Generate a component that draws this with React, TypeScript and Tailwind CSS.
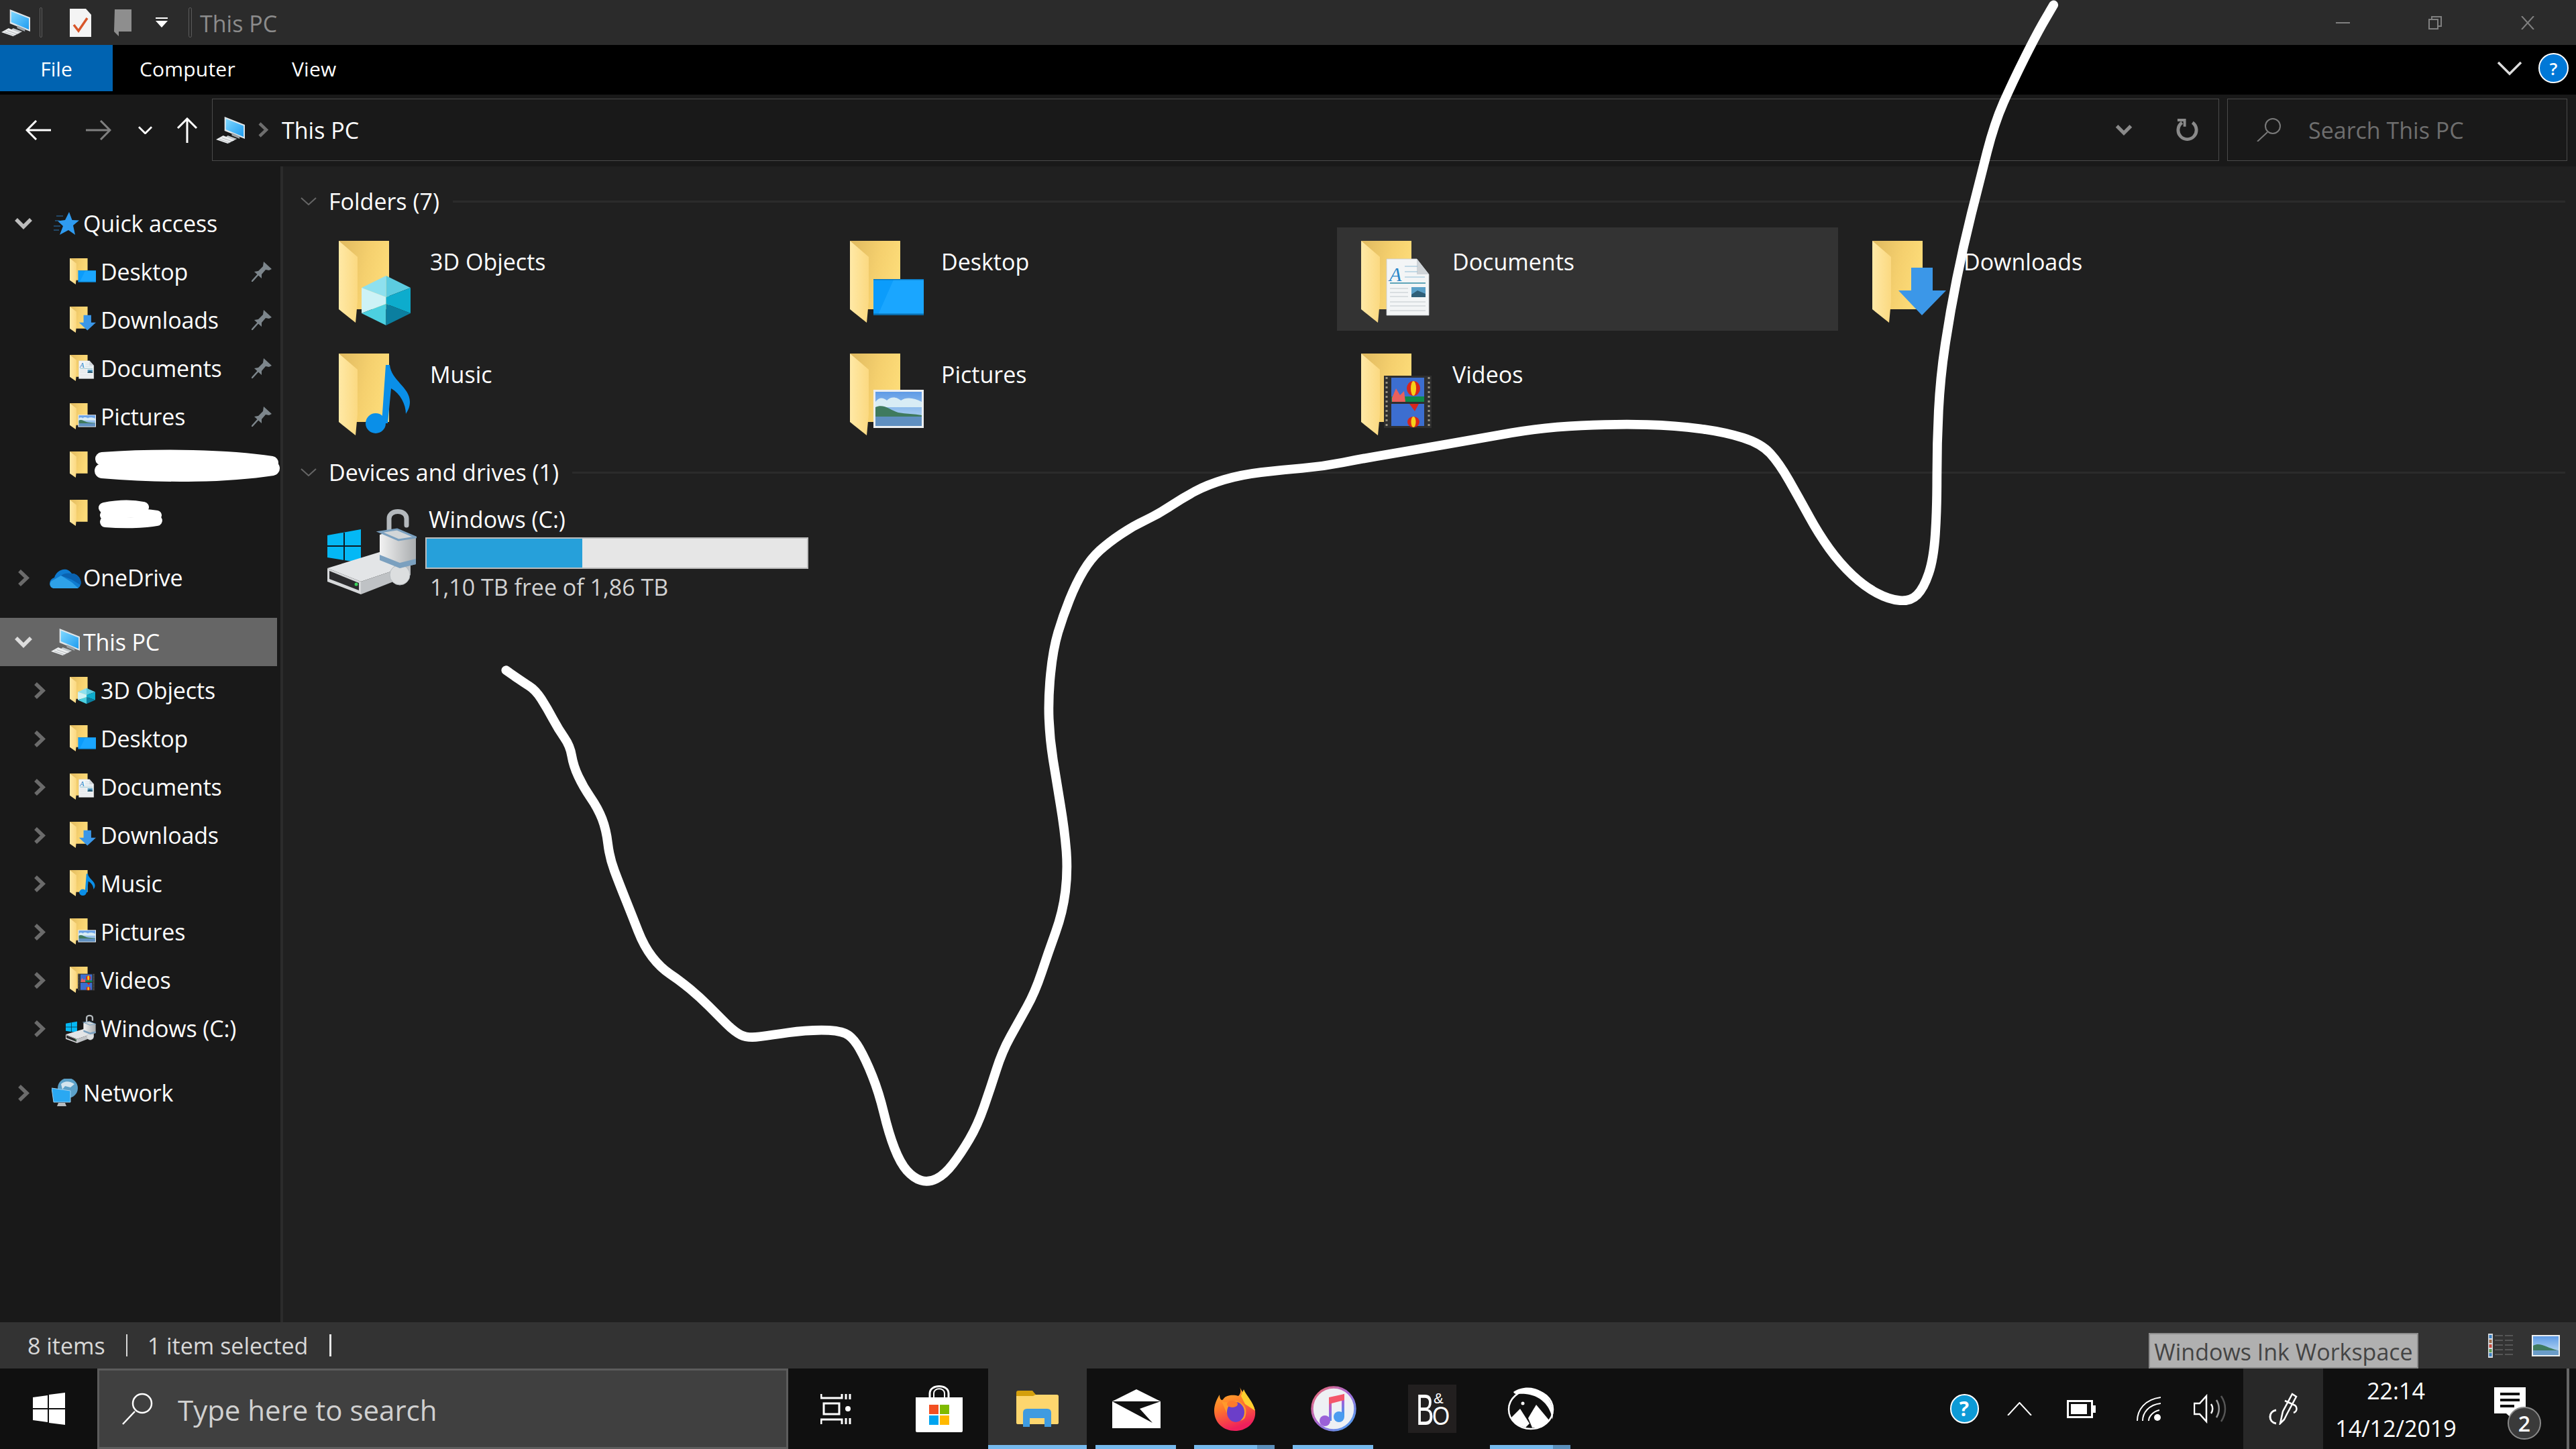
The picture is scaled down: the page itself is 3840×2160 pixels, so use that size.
import React from "react";

const FONT = '"Open Sans", "Noto Sans", sans-serif';

// ink strokes traced on the 1568 wide preview, scaled up in the svg
const INK: [number, number][] = [
  [308, 408], [318, 415], [326, 420], [333, 431], [340, 444], [347, 454], [349, 466], [355, 479], [364, 492], [369, 505],
  [371, 522], [377, 538], [385, 558], [392, 576], [402, 589], [414, 597], [426, 607], [437, 618], [447, 628], [455, 632],
  [470, 630], [490, 627], [510, 627], [519, 631], [527, 645], [535, 665], [541, 690], [548, 708], [556, 717], [565, 720],
  [575, 715], [585, 702], [595, 685], [603, 662], [610, 640], [620, 622], [630, 604], [638, 580], [647, 555], [650, 530],
  [648, 505], [643, 475], [639, 450], [638, 425], [641, 395], [647, 375], [655, 355], [664, 340], [675, 330], [690, 320],
  [705, 313], [720, 303], [735, 295], [755, 289], [780, 286], [805, 284], [830, 279], [860, 274], [900, 267], [940, 260],
  [985, 258], [1020, 259], [1050, 263], [1072, 270], [1083, 282], [1095, 303], [1107, 325], [1120, 343], [1135, 357], [1150, 365],
  [1163, 366], [1171, 358], [1177, 340], [1179, 310], [1179, 270], [1181, 230], [1187, 190], [1195, 150], [1205, 110], [1214, 75],
  [1225, 50], [1240, 20], [1250, 3],
];

function smooth(pts: [number, number][]) {
  let d = `M${pts[0][0]} ${pts[0][1]}`;
  for (let i = 1; i < pts.length - 1; i++) {
    const mx = (pts[i][0] + pts[i + 1][0]) / 2;
    const my = (pts[i][1] + pts[i + 1][1]) / 2;
    d += ` Q${pts[i][0]} ${pts[i][1]} ${mx} ${my}`;
  }
  const last = pts[pts.length - 1];
  return d + ` L${last[0]} ${last[1]}`;
}

function Defs() {
  return (
    <svg className="absolute h-0 w-0">
      <defs>
        <linearGradient id="fBack" x1="0" y1="0" x2="1" y2="0.3">
          <stop offset="0" stopColor="#dfb95f" />
          <stop offset="0.6" stopColor="#f5d06e" />
          <stop offset="1" stopColor="#fcdb78" />
        </linearGradient>
        <linearGradient id="fFlap" x1="0" y1="0" x2="1" y2="0">
          <stop offset="0" stopColor="#ffe9a6" />
          <stop offset="1" stopColor="#fbd981" />
        </linearGradient>
        <linearGradient id="screen" x1="0" y1="0" x2="1" y2="1">
          <stop offset="0" stopColor="#7fd8ff" />
          <stop offset="1" stopColor="#1f9cf0" />
        </linearGradient>
        <linearGradient id="sky" x1="0" y1="0" x2="0" y2="1">
          <stop offset="0" stopColor="#5f9be6" />
          <stop offset="1" stopColor="#c4e0f2" />
        </linearGradient>
        <linearGradient id="ff" x1="0" y1="0" x2="0.3" y2="1">
          <stop offset="0" stopColor="#ffc02f" />
          <stop offset="0.5" stopColor="#ff7a2a" />
          <stop offset="1" stopColor="#ef1f5c" />
        </linearGradient>
        <linearGradient id="itRing" x1="0" y1="0" x2="1" y2="1">
          <stop offset="0" stopColor="#f06a6a" />
          <stop offset="0.5" stopColor="#a66ad8" />
          <stop offset="1" stopColor="#3fa8f0" />
        </linearGradient>
        <linearGradient id="itNote" x1="0" y1="0" x2="0.4" y2="1">
          <stop offset="0" stopColor="#f4566a" />
          <stop offset="0.55" stopColor="#a45fd8" />
          <stop offset="1" stopColor="#3a9bf0" />
        </linearGradient>
        <linearGradient id="lock" x1="0" y1="0" x2="1" y2="0">
          <stop offset="0" stopColor="#f2f2f2" />
          <stop offset="1" stopColor="#a9acae" />
        </linearGradient>
      </defs>
    </svg>
  );
}

type Overlay = "cube" | "desktop" | "doc" | "down" | "music" | "pic" | "video" | "none";

function FolderIcon({ kind, className }: { kind: Overlay; className: string }) {
  return (
    <svg viewBox="0 0 110 128" preserveAspectRatio="none" className={className}>
      <path d="M0 0H75V102H26Z" fill="url(#fBack)" />
      <path d="M0 0L28 24V90L25 122L0 102Z" fill="url(#fFlap)" />
      {kind === "cube" && (
        <g>
          <polygon points="70.5,52 107,70 70.5,84" fill="#5ccbe0" />
          <polygon points="70.5,52 34,70 70.5,84" fill="#8ee0ee" />
          <polygon points="34,70 70.5,84 70.5,94 34,108" fill="#cdf2f6" />
          <polygon points="107,70 70.5,84 70.5,94 107,108" fill="#0daccd" />
          <polygon points="34,108 70.5,94 70.5,126" fill="#4cd0e0" />
          <polygon points="107,108 70.5,94 70.5,126" fill="#0b7fa0" />
        </g>
      )}
      {kind === "desktop" && (
        <g>
          <rect x="35" y="57" width="75" height="54" fill="#0b9cfb" />
          <polygon points="65,58 110,58 110,110 42,110" fill="#1aa6ff" />
          <rect x="35" y="57" width="75" height="1.5" fill="#0a78c0" />
          <rect x="35" y="108.5" width="75" height="2.5" fill="#0a6aa8" />
        </g>
      )}
      {kind === "doc" && (
        <g>
          <polygon points="38,27 83,27 101,50 101,111 38,111" fill="#f3f5f6" stroke="#c8ccd0" strokeWidth="0.8" />
          <polygon points="83,27 101,50 83,50" fill="#cfd4d8" />
          <text x="42" y="60" fontFamily="'Liberation Serif', serif" fontStyle="italic" fontSize="30" fill="#2a86c9">A</text>
          <path d="M65 38H84M65 46H84M65 54H95" stroke="#8fbcd6" strokeWidth="1" />
          <rect x="43" y="62" width="53" height="2" fill="#5fa5b8" />
          <rect x="75" y="69" width="21" height="15" fill="#5aa0c8" />
          <path d="M75 80L84 74L96 79V84H75Z" fill="#2f5f78" />
          <path d="M43 71H70M43 77H70M43 83H70M43 91H96M43 97H96M43 104H96" stroke="#c0c7cc" strokeWidth="1" />
        </g>
      )}
      {kind === "down" && <path d="M58 40H90V74H110L74 111L39 74H58Z" fill="#3b97e8" />}
      {kind === "music" && (
        <g fill="#0a8fe8">
          <ellipse cx="55" cy="104" rx="15" ry="15" />
          <path d="M64 104L70 17H76C78 40 106 50 106 72C106 80 103 85 100 90C100 76 92 60 78 52L73 104Z" />
        </g>
      )}
      {kind === "pic" && (
        <g>
          <rect x="35" y="54" width="75" height="57" fill="#eceff1" />
          <rect x="38" y="57" width="69" height="51" fill="url(#sky)" />
          <path d="M38 72C44 64 50 66 55 70C62 62 72 66 76 70C84 64 96 66 107 72V80H38Z" fill="#d8ecf5" />
          <path d="M38 80C50 74 60 84 72 88C84 90 96 90 107 92V95H38Z" fill="#3f7a5e" />
          <rect x="38" y="94" width="69" height="14" fill="#5f8fc0" />
        </g>
      )}
      {kind === "video" && (
        <g>
          <rect x="34" y="33" width="71" height="78" fill="#2f2f2f" />
          <path d="M38 35V109M101 35V109" stroke="#9a9484" strokeWidth="3" strokeDasharray="3 4" />
          <rect x="45" y="36" width="49" height="36" fill="#3c6ed0" />
          <rect x="45" y="75" width="49" height="33" fill="#3c6ed0" />
          <rect x="45" y="64" width="49" height="8" fill="#0e8a4a" />
          <ellipse cx="78" cy="52" rx="10" ry="11" fill="#d8261c" />
          <ellipse cx="78" cy="52" rx="4" ry="11" fill="#f7d21a" />
          <path d="M46 66L52 52L58 62L64 56L66 72H46Z" fill="#e8605c" />
          <path d="M72 75H86L80 86Z" fill="#d8261c" />
          <ellipse cx="78" cy="102" rx="9" ry="8" fill="#d8261c" />
          <ellipse cx="78" cy="102" rx="3.5" ry="8" fill="#f7d21a" />
        </g>
      )}
    </svg>
  );
}

function PcIcon({ className }: { className: string }) {
  return (
    <svg viewBox="0 0 44 40" preserveAspectRatio="none" className={className}>
      <polygon points="13,0 44,12 44,33 13,21" fill="#dfe6ea" />
      <polygon points="15,3 42,13.5 42,30 15,19" fill="url(#screen)" />
      <polygon points="24,24 36,29 36,33 24,28" fill="#9aa3a8" />
      <polygon points="18,28 32,33 26,36 14,31" fill="#c5cacd" />
      <polygon points="0,34 11,28 28,35 18,40" fill="#eceeef" />
      <path d="M5 33.5L21 39M9 31.5L25 37" stroke="#9aa0a4" strokeWidth="0.7" />
    </svg>
  );
}

function DriveIcon({ className }: { className: string }) {
  return (
    <svg viewBox="0 0 133 129" preserveAspectRatio="none" className={className}>
      <polygon points="0,41 50,32 50,82 0,74" fill="#04b8f5" />
      <path d="M25 37V78M0 57H50" stroke="#0d1a22" strokeWidth="2" />
      <path d="M92 40V16C92 2 118 2 118 16V26" fill="none" stroke="#b4b9bd" strokeWidth="7" strokeLinecap="round" />
      <polygon points="0,90 81,65 124,85 50,110" fill="#e3e5e7" />
      <polygon points="50,110 124,85 124,100 50,129" fill="#bfc2c5" />
      <polygon points="0,90 50,110 50,129 0,110" fill="#d6d8da" />
      <polygon points="3,94 47,112 47,123 3,106" fill="#2b2b2d" />
      <circle cx="43" cy="114" r="2.5" fill="#39d35a" />
      <ellipse cx="108" cy="100" rx="15" ry="15" fill="#dcdedf" stroke="#b4b9bd" strokeWidth="1" />
      <polygon points="78,40 104,32 132,44 132,84 108,90 78,74" fill="url(#lock)" />
      <polygon points="78,36 104,32 132,44 106,48" fill="#d2d6d8" stroke="#7ba0bf" strokeWidth="3" />
      <polygon points="78,70 108,82 132,76 132,84 108,90 78,78" fill="#7ba0bf" />
    </svg>
  );
}

function StarIcon() {
  return (
    <svg viewBox="0 0 38 34" preserveAspectRatio="none" className="h-[34px] w-[38px] translate-x-[2px]">
      <polygon points="23,0 27.5,12 38,12.5 29,20 32,34 22,27 9,34 14,21 6,13.5 17,12" fill="#2f9bf0" />
      <path d="M4 6H14M2 13H9M0 21H10M0 27H8" stroke="#2a78b8" strokeWidth="1.2" />
    </svg>
  );
}

function CloudIcon() {
  return (
    <svg viewBox="0 0 48 31" preserveAspectRatio="none" className="h-[31px] w-[48px]">
      <path d="M8 31C0 31 -2 18 8 15C11 4 26 -3 34 9C42 8 50 18 47 26C46 29 44 31 40 31Z" fill="#0f7bd0" />
      <path d="M8 31C2 31 -1 24 4 20L18 12L34 22L44 31Z" fill="#2ea1e8" />
      <path d="M18 12C22 8 30 8 34 9C42 8 50 18 47 26L34 18Z" fill="#0a62b0" />
    </svg>
  );
}

function NetworkIcon() {
  return (
    <svg viewBox="0 0 40 43" preserveAspectRatio="none" className="h-[43px] w-[40px]">
      <circle cx="24" cy="14" r="15" fill="#5ba0c8" />
      <path d="M14 8C20 2 28 4 34 8L28 13L20 11L16 16Z" fill="#d3e4ee" />
      <polygon points="0,14 28,18 28,35 3,35" fill="#2aa8f2" stroke="#9fd0ee" strokeWidth="1" />
      <polygon points="10,36 20,36 22,41 8,41" fill="#b8bcc0" />
    </svg>
  );
}

function ChevronIcon({ dir, color, className }: { dir: "down" | "right"; color: string; className: string }) {
  return (
    <svg viewBox={dir === "down" ? "0 0 28 18" : "0 0 18 27"} preserveAspectRatio="none" className={className}>
      <polyline
        points={dir === "down" ? "3,3 14,14 25,3" : "3,3 14,13.5 3,24"}
        fill="none"
        stroke={color}
        strokeWidth="5.5"
      />
    </svg>
  );
}

function PinIcon() {
  return (
    <svg viewBox="0 0 30 30" className="ml-auto mr-[13px] h-[30px] w-[30px]">
      <path d="M18 0L30 11L26 13L21 12L15 19L15 25L4 15L10 14L17 7Z" fill="#7d868c" />
      <path d="M10 19L0 30" stroke="#7d868c" strokeWidth="2.5" />
    </svg>
  );
}

function Row({
  level,
  chevron,
  icon,
  label,
  pinned,
  selected,
}: {
  level: 1 | 2;
  chevron?: "down" | "right";
  icon: React.ReactNode;
  label?: string;
  pinned?: boolean;
  selected?: boolean;
}) {
  return (
    <div className={`flex h-[72px] items-center text-white ${selected ? "mr-[5px] bg-[#666666]" : ""}`}>
      {level === 1 ? (
        <div className="flex w-[70px] justify-center">
          {chevron === "down" && (
            <ChevronIcon dir="down" color={selected ? "#dddddd" : "#bdbdbd"} className="h-[18px] w-[28px]" />
          )}
          {chevron === "right" && <ChevronIcon dir="right" color="#6b6b6b" className="h-[27px] w-[18px]" />}
        </div>
      ) : (
        <div className="w-[104px] pl-[50px]">
          {chevron === "right" && <ChevronIcon dir="right" color="#6b6b6b" className="h-[27px] w-[18px]" />}
        </div>
      )}
      <div className={level === 1 ? "flex w-[54px] justify-center" : "flex w-[46px] items-center"}>{icon}</div>
      {label && <span className="tracking-[-0.15px]">{label}</span>}
      {pinned && <PinIcon />}
    </div>
  );
}

const SMALL = "h-[41px] w-[39px]";

function Sidebar() {
  return (
    <div className="w-[418px] shrink-0 bg-[#191919] pt-[49px]">
      <Row level={1} chevron="down" icon={<StarIcon />} label="Quick access" />
      <Row level={2} icon={<FolderIcon kind="desktop" className={SMALL} />} label="Desktop" pinned />
      <Row level={2} icon={<FolderIcon kind="down" className={SMALL} />} label="Downloads" pinned />
      <Row level={2} icon={<FolderIcon kind="doc" className={SMALL} />} label="Documents" pinned />
      <Row level={2} icon={<FolderIcon kind="pic" className={SMALL} />} label="Pictures" pinned />
      <Row level={2} icon={<FolderIcon kind="none" className={SMALL} />} />
      <Row level={2} icon={<FolderIcon kind="none" className={SMALL} />} />
      <div className="mt-[24px]">
        <Row level={1} chevron="right" icon={<CloudIcon />} label="OneDrive" />
      </div>
      <div className="mt-[24px]">
        <Row level={1} chevron="down" icon={<PcIcon className="h-[40px] w-[43px]" />} label="This PC" selected />
        <Row level={2} chevron="right" icon={<FolderIcon kind="cube" className={SMALL} />} label="3D Objects" />
        <Row level={2} chevron="right" icon={<FolderIcon kind="desktop" className={SMALL} />} label="Desktop" />
        <Row level={2} chevron="right" icon={<FolderIcon kind="doc" className={SMALL} />} label="Documents" />
        <Row level={2} chevron="right" icon={<FolderIcon kind="down" className={SMALL} />} label="Downloads" />
        <Row level={2} chevron="right" icon={<FolderIcon kind="music" className={SMALL} />} label="Music" />
        <Row level={2} chevron="right" icon={<FolderIcon kind="pic" className={SMALL} />} label="Pictures" />
        <Row level={2} chevron="right" icon={<FolderIcon kind="video" className={SMALL} />} label="Videos" />
        <Row
          level={2}
          chevron="right"
          icon={<DriveIcon className="-ml-[6px] h-[43px] w-[45px] shrink-0" />}
          label="Windows (C:)"
        />
      </div>
      <div className="mt-[24px]">
        <Row level={1} chevron="right" icon={<NetworkIcon />} label="Network" />
      </div>
    </div>
  );
}

function GroupHeader({ label }: { label: string }) {
  return (
    <div className="flex h-[50px] items-center">
      <svg viewBox="0 0 24 12" className="h-[12px] w-[24px]">
        <polyline points="1,1 12,11 23,1" fill="none" stroke="#666666" strokeWidth="2" />
      </svg>
      <span className="ml-[18px] text-white">{label}</span>
      <div className="ml-[20px] h-[3px] flex-1 bg-[#2b2b2b]" />
    </div>
  );
}

function FolderItem({ kind, label, selected }: { kind: Overlay; label: string; selected?: boolean }) {
  return (
    <div className={`flex h-[154px] items-start pl-[36px] pt-[20px] ${selected ? "bg-[#333333]" : ""}`}>
      <FolderIcon kind={kind} className="h-[128px] w-[110px] shrink-0" />
      <span className="relative z-0 mt-[8px] ml-[26px] text-white">{label}</span>
    </div>
  );
}

function Main() {
  return (
    <div className="flex-1 border-l-[4px] border-[#2b2b2b] bg-[#202020] pl-[26px] pr-[16px] pt-[27px]">
      <GroupHeader label="Folders (7)" />
      <div className="mt-[14px] ml-[21px] grid grid-cols-[747px_747px_747px_747px] gap-x-[15px] gap-y-[14px]">
        <FolderItem kind="cube" label="3D Objects" />
        <FolderItem kind="desktop" label="Desktop" />
        <FolderItem kind="doc" label="Documents" selected />
        <FolderItem kind="down" label="Downloads" />
        <FolderItem kind="music" label="Music" />
        <FolderItem kind="pic" label="Pictures" />
        <FolderItem kind="video" label="Videos" />
      </div>
      <div className="mt-[18px]">
        <GroupHeader label="Devices and drives (1)" />
      </div>
      <div className="mt-[28px] ml-[40px] flex items-start">
        <DriveIcon className="h-[129px] w-[133px] shrink-0" />
        <div className="ml-[13px] w-[571px]">
          <div className="-mt-[6px] h-[50px] pl-[5px] text-white">Windows (C:)</div>
          <div className="flex h-[47px] border-[2px] border-[#bcbcbc] bg-[#e6e6e6]">
            <div className="h-full w-[232px] bg-[#26a0da]" />
          </div>
          <div className="mt-[4px] pl-[7px] text-[#d2d2d2]">1,10 TB free of 1,86 TB</div>
        </div>
      </div>
    </div>
  );
}

function TitleBar() {
  return (
    <div className="flex h-[67px] items-center bg-[#2b2b2b] pl-[2px]">
      <PcIcon className="h-[40px] w-[43px]" />
      <div className="ml-[14px] h-[45px] w-[4px] rounded-full border border-[#5c5c5c]" />
      <svg viewBox="0 0 32 42" className="ml-[41px] h-[42px] w-[32px]">
        <polygon points="0,0 24,0 32,9 32,42 0,42" fill="#f4f4f4" />
        <polyline points="6,24 13,33 26,14" fill="none" stroke="#d8562a" strokeWidth="3.5" />
      </svg>
      <svg viewBox="0 0 27 40" className="ml-[34px] h-[40px] w-[27px]">
        <polygon points="1,0 26,0 26,33 7,33 7,40 0,33" fill="#8e8e8e" />
      </svg>
      <svg viewBox="0 0 18 15" className="ml-[35px] h-[15px] w-[18px]">
        <rect width="18" height="2" fill="#ffffff" />
        <polygon points="0,5 18,5 9,15" fill="#ffffff" />
      </svg>
      <div className="ml-[31px] h-[45px] w-[5px] rounded-full border border-[#5c5c5c]" />
      <span className="ml-[12px] pt-[2px] text-[#8c8c8c]">This PC</span>
      <div className="ml-auto flex items-center pr-[62px]">
        <div className="h-[2px] w-[21px] bg-[#808080]" />
        <svg viewBox="0 0 20 20" className="ml-[117px] h-[20px] w-[20px]" fill="none" stroke="#808080" strokeWidth="2">
          <rect x="1" y="5" width="13" height="14" />
          <path d="M5 5V1H19V15H14" />
        </svg>
        <svg viewBox="0 0 20 20" className="ml-[118px] h-[20px] w-[20px]" fill="none" stroke="#808080" strokeWidth="2">
          <path d="M1 0L19 20M19 0L1 20" />
        </svg>
      </div>
    </div>
  );
}

function Ribbon() {
  return (
    <div className="flex h-[74px] items-start bg-black text-[30px] text-white">
      <div className="flex h-[69px] w-[168px] items-center justify-center bg-[#0063b1] pt-[3px]">File</div>
      <div className="ml-[40px] flex h-[69px] items-center pt-[3px] tracking-[0.2px]">Computer</div>
      <div className="ml-[84px] flex h-[69px] items-center pt-[3px] tracking-[0.3px]">View</div>
      <div className="ml-auto flex h-[69px] items-center pr-[11px]">
        <svg viewBox="0 0 38 22" className="h-[22px] w-[38px]">
          <polyline points="2,2 19,19 36,2" fill="none" stroke="#dcdcdc" strokeWidth="3.5" />
        </svg>
        <div className="ml-[24px] flex h-[45px] w-[45px] items-center justify-center rounded-full border-[2px] border-white bg-[#0078d7] text-[26px] font-semibold leading-none">
          ?
        </div>
      </div>
    </div>
  );
}

function NavBar() {
  return (
    <div className="flex h-[107px] items-start bg-[#191919] pt-[6px]">
      <div className="flex h-[93px] w-[316px] shrink-0 items-center pl-[38px]">
        <svg viewBox="0 0 38 30" className="h-[30px] w-[38px]" fill="none" stroke="#ffffff" strokeWidth="3">
          <path d="M38 15H3M16 1L2 15L16 29" />
        </svg>
        <svg viewBox="0 0 38 30" className="ml-[52px] h-[30px] w-[38px]" fill="none" stroke="#808080" strokeWidth="3">
          <path d="M0 15H35M22 1L36 15L22 29" />
        </svg>
        <svg viewBox="0 0 22 12" className="ml-[40px] h-[12px] w-[21px]" fill="none" stroke="#ffffff" strokeWidth="3">
          <path d="M1 1L11 11L21 1" />
        </svg>
        <svg viewBox="0 0 32 38" className="ml-[36px] h-[38px] w-[32px]" fill="none" stroke="#ffffff" strokeWidth="3">
          <path d="M16 38V3M2 16L16 2L30 16" />
        </svg>
      </div>
      <div className="flex h-[93px] w-[2992px] shrink-0 items-center border border-[#4a4a4a] pl-[5px]">
        <PcIcon className="h-[40px] w-[43px]" />
        <svg viewBox="0 0 15 23" className="ml-[20px] h-[23px] w-[15px]" fill="none" stroke="#6e6e6e" strokeWidth="4.5">
          <path d="M2 2L12 11.5L2 21" />
        </svg>
        <span className="ml-[20px] text-white">This PC</span>
        <div className="ml-auto flex items-center pr-[30px]">
          <svg viewBox="0 0 28 18" className="h-[17px] w-[28px]" fill="none" stroke="#8a8a8a" strokeWidth="5.5">
            <path d="M3 3L14 14L25 3" />
          </svg>
          <svg viewBox="0 0 34 34" className="ml-[64px] h-[33px] w-[33px]" fill="none" stroke="#8a8a8a" strokeWidth="5">
            <path d="M9 6A14 14 0 1 0 25 6" />
            <path d="M2 2H13V12" strokeWidth="4" />
          </svg>
        </div>
      </div>
      <div className="ml-[12px] flex h-[93px] w-[507px] shrink-0 items-center border border-[#4a4a4a] pl-[43px]">
        <svg viewBox="0 0 37 35" className="h-[35px] w-[37px]" fill="none" stroke="#7a7a7a" strokeWidth="2">
          <ellipse cx="24" cy="12" rx="11" ry="11" />
          <path d="M16 21L1 35" />
        </svg>
        <span className="ml-[40px] text-[#6e6e6e]">Search This PC</span>
      </div>
    </div>
  );
}

function StatusBar() {
  return (
    <div className="flex h-[69px] items-center bg-[#333333] pl-[41px] text-[#d8d8d8]">
      <span>8 items</span>
      <div className="ml-[31px] h-[33px] w-[2px] bg-[#d8d8d8]" />
      <span className="ml-[30px]">1 item selected</span>
      <div className="ml-[32px] h-[33px] w-[3px] bg-[#e8e8e8]" />
      <div className="ml-auto flex items-center pr-[24px]">
        <svg viewBox="0 0 40 36" className="h-[36px] w-[40px]">
          <rect width="7" height="36" fill="#d6dbe0" />
          <rect x="1.5" y="2" width="4" height="5" fill="#3b7fc0" />
          <rect x="1.5" y="9" width="4" height="5" fill="#9c6b4a" />
          <rect x="1.5" y="16" width="4" height="5" fill="#c84a3a" />
          <rect x="1.5" y="23" width="4" height="5" fill="#5c9a56" />
          <rect x="1.5" y="29" width="4" height="5" fill="#3b7fc0" />
          <path d="M10 3H40M10 10H40M10 17H40M10 24H40M10 31H40" stroke="#7a7a7a" strokeWidth="1" strokeDasharray="12 3" />
        </svg>
        <svg viewBox="0 0 42 32" className="ml-[25px] h-[32px] w-[42px]">
          <rect width="42" height="32" fill="#eceff1" />
          <rect x="2" y="2" width="38" height="28" fill="url(#sky)" />
          <path d="M2 16C14 10 22 20 40 23V24H2Z" fill="#3f7a5e" />
          <rect x="2" y="23" width="38" height="7" fill="#6a9cc8" />
        </svg>
      </div>
    </div>
  );
}

function TaskCell({ children, bar, active }: { children: React.ReactNode; bar?: "plain" | "stack"; active?: boolean }) {
  return (
    <div className={`relative flex h-[120px] w-[147px] shrink-0 items-center justify-center ${active ? "bg-[#333333]" : ""}`}>
      {children}
      {bar === "plain" && (
        <div className={`absolute bottom-0 h-[6px] bg-[#76b9ed] ${active ? "inset-x-0" : "left-[13px] w-[120px]"}`} />
      )}
      {bar === "stack" && (
        <div className="absolute bottom-0 left-[13px] flex h-[6px] w-[120px] bg-[#76b9ed]">
          <div className="ml-auto w-[26px] bg-[#5b8fbb]" />
        </div>
      )}
    </div>
  );
}

function Taskbar() {
  return (
    <div className="flex h-[120px] items-stretch bg-[#101010]">
      <div className="flex w-[145px] shrink-0 items-center justify-center">
        <svg viewBox="0 0 48 48" preserveAspectRatio="none" className="h-[48px] w-[48px]">
          <polygon points="0,7 22,4 22,23 0,23" fill="#ffffff" />
          <polygon points="24,3 48,0 48,23 24,23" fill="#ffffff" />
          <polygon points="0,25 22,25 22,44 0,41" fill="#ffffff" />
          <polygon points="24,25 48,25 48,48 24,45" fill="#ffffff" />
        </svg>
      </div>
      <div className="flex w-[1030px] shrink-0 items-center border-[3px] border-[#5c5c5c] bg-[#404040] pl-[33px]">
        <svg viewBox="0 0 47 48" preserveAspectRatio="none" className="h-[48px] w-[47px]" fill="none" stroke="#ffffff" strokeWidth="2.5">
          <ellipse cx="31" cy="16" rx="14" ry="14" />
          <path d="M20 28L2 47" />
        </svg>
        <span className="ml-[37px] pt-[3px] text-[42px] text-[#d0d0d0]">Type here to search</span>
      </div>
      <div className="w-[4px] shrink-0" />
      <TaskCell>
        <svg viewBox="0 0 48 45" preserveAspectRatio="none" className="-translate-x-[6px] h-[45px] w-[48px]" fill="none" stroke="#ffffff" strokeWidth="3">
          <path d="M1 0V6H32V0M1 45V38H32V45M5 14H28V30H5Z" />
          <path d="M38 0V8M38 36V45M44 0V8M44 36V45" />
          <circle cx="41" cy="22" r="4" fill="#ffffff" stroke="none" />
        </svg>
      </TaskCell>
      <TaskCell>
        <svg viewBox="0 0 70 70" className="h-[70px] w-[70px]">
          <path d="M21 22V12C21 -2 49 -2 49 12V22" fill="none" stroke="#ffffff" strokeWidth="3" />
          <path d="M27 22V12C27 3 43 3 43 12V22" fill="none" stroke="#ffffff" strokeWidth="2" />
          <path d="M0 18H70V68Q70 70 68 70H2Q0 70 0 68Z" fill="#ffffff" />
          <rect x="20" y="29" width="14" height="14" fill="#f25022" />
          <rect x="36" y="29" width="14" height="14" fill="#7fba00" />
          <rect x="20" y="45" width="14" height="14" fill="#00a4ef" />
          <rect x="36" y="45" width="14" height="14" fill="#ffb900" />
        </svg>
      </TaskCell>
      <TaskCell active bar="plain">
        <svg viewBox="0 0 63 54" preserveAspectRatio="none" className="h-[54px] w-[63px]">
          <path d="M0 3Q0 0 3 0H24L29 6H60Q63 6 63 9V20H0Z" fill="#d49f0c" />
          <path d="M0 8H25L29 6H60Q63 6 63 9V48Q63 50 60 50H3Q0 50 0 48Z" fill="#fdd66e" />
          <path d="M10 54V33Q10 27 16 27H46Q52 27 52 33V54H42V41H20V54Z" fill="#3f9be0" />
        </svg>
      </TaskCell>
      <TaskCell bar="plain">
        <svg viewBox="0 0 72 58" preserveAspectRatio="none" className="h-[58px] w-[72px]">
          <polygon points="36,0 72,18 72,58 0,58 0,18" fill="#ffffff" />
          <polygon points="0,18 72,18 41,29 60,50" fill="#101010" />
        </svg>
      </TaskCell>
      <TaskCell bar="stack">
        <svg viewBox="0 0 62 66" preserveAspectRatio="none" className="h-[66px] w-[62px]">
          <path d="M38 0C42 12 58 20 61 36C63 54 48 66 31 66C14 66 0 54 0 36C0 28 3 20 8 12C8 20 12 22 14 18C18 12 30 12 36 14C40 10 40 6 38 0Z" fill="url(#ff)" />
          <path d="M44 4C48 14 58 22 61 36L46 26L40 14Z" fill="#ffd02f" />
          <path d="M10 20C14 26 22 22 30 21C40 21 52 30 46 46C42 54 26 52 20 42C16 34 14 28 10 20Z" fill="#ff9a2a" />
          <ellipse cx="32" cy="38" rx="13" ry="15" fill="#6b3ec9" />
          <ellipse cx="27" cy="26" rx="8" ry="5" fill="#ff7a2a" />
        </svg>
      </TaskCell>
      <TaskCell bar="plain">
        <svg viewBox="0 0 68 68" preserveAspectRatio="none" className="h-[68px] w-[68px]">
          <circle cx="34" cy="34" r="32" fill="#eef0f4" stroke="url(#itRing)" strokeWidth="3.5" />
          <path d="M27 20L50 12V46H46V20L31 25V52H27Z" fill="url(#itNote)" />
          <path d="M27 17L50 12V21L27 27Z" fill="#f4566a" />
          <ellipse cx="21" cy="52" rx="8" ry="8" fill="#9a60d8" />
          <ellipse cx="42" cy="46" rx="8" ry="8" fill="#4a9cf0" />
        </svg>
      </TaskCell>
      <TaskCell>
        <svg viewBox="0 0 72 72" className="h-[72px] w-[72px]">
          <rect width="72" height="72" fill="#221f1f" />
          <text x="0" y="60" transform="translate(12 0) scale(0.62 1)" fontFamily="'Liberation Sans', sans-serif" fontSize="64" fill="#ffffff">B</text>
          <text x="38" y="28" fontFamily="'Liberation Sans', sans-serif" fontSize="22" fill="#ffffff">&amp;</text>
          <text x="0" y="60" transform="translate(36 0) scale(0.88 1)" fontFamily="'Liberation Sans', sans-serif" fontSize="38" fill="#ffffff">O</text>
        </svg>
      </TaskCell>
      <TaskCell bar="stack">
        <svg viewBox="0 0 71 64" preserveAspectRatio="none" className="h-[64px] w-[71px]">
          <ellipse cx="36" cy="33" rx="33" ry="29" fill="none" stroke="#ffffff" strokeWidth="2.5" />
          <path d="M10 7C24 -3 48 -2 60 14C68 24 71 36 68 48C66 30 52 12 28 10C18 9 12 12 10 7Z" fill="#ffffff" />
          <circle cx="24" cy="24" r="2.5" fill="#ffffff" />
          <polygon points="6,46 20,32 34,54 28,60 14,56" fill="#ffffff" />
          <polygon points="32,46 44,26 64,50 52,60 38,60" fill="#ffffff" />
        </svg>
      </TaskCell>
      <div className="flex-1" />
      <Tray />
    </div>
  );
}

function Tray() {
  return (
    <div className="flex w-[960px] shrink-0 items-stretch">
      <div className="flex w-[96px] items-center justify-center">
        <div className="flex h-[44px] w-[43px] items-center justify-center rounded-full border-[2px] border-white bg-[#0d9ad6] text-[30px] font-bold leading-none text-white">
          ?
        </div>
      </div>
      <div className="flex w-[69px] items-center justify-center">
        <svg viewBox="0 0 37 20" className="h-[20px] w-[37px]" fill="none" stroke="#ffffff" strokeWidth="2">
          <path d="M1 20L18.5 1L36 20" />
        </svg>
      </div>
      <div className="flex w-[115px] items-center justify-center">
        <svg viewBox="0 0 43 27" className="h-[27px] w-[43px]">
          <rect x="1.5" y="1.5" width="36" height="24" fill="none" stroke="#ffffff" strokeWidth="3" />
          <rect x="6" y="6" width="24" height="15" fill="#ffffff" />
          <rect x="38" y="8" width="5" height="11" fill="#ffffff" />
        </svg>
      </div>
      <div className="flex w-[85px] items-center justify-center">
        <svg viewBox="0 0 36 36" className="h-[36px] w-[36px]" fill="none" stroke="#ffffff" strokeWidth="2">
          <path d="M1 36C1 20 12 4 36 1M9 36C9 24 18 12 36 10M18 36C18 30 24 22 34 20" />
          <circle cx="31" cy="31" r="5" fill="#ffffff" stroke="none" />
        </svg>
      </div>
      <div className="flex w-[99px] items-center justify-center">
        <svg viewBox="0 0 50 44" className="h-[44px] w-[50px]" fill="none" stroke="#ffffff" strokeWidth="2.5">
          <path d="M1 14H9L19 3V41L9 30H1Z" />
          <path d="M26 15C29 19 29 25 26 29" />
          <path d="M34 9C39 17 39 27 34 35" stroke="#9a9a9a" />
          <path d="M41 3C49 15 49 29 41 41" stroke="#555555" />
        </svg>
      </div>
      <div className="flex w-[119px] items-center justify-center bg-[#282828]">
        <svg viewBox="0 0 50 48" className="h-[48px] w-[50px]" fill="none" stroke="#ffffff" strokeWidth="2.5">
          <path d="M26 40L20 46L24 28L38 2L44 6L30 32Z" />
          <path d="M27 12L40 18C46 20 46 28 40 30" />
          <path d="M14 26C2 28 2 44 14 46" strokeWidth="3" />
        </svg>
      </div>
      <div className="flex w-[217px] flex-col items-center justify-center gap-[21px] pt-[3px] text-[34px] leading-[35px] text-white">
        <span>22:14</span>
        <span>14/12/2019</span>
      </div>
      <div className="relative flex w-[146px] items-center justify-center">
        <svg viewBox="0 0 47 48" preserveAspectRatio="none" className="mb-[16px] -ml-[24px] h-[48px] w-[47px]">
          <path d="M0 0H47V39H28V48L18 39H0Z" fill="#ffffff" />
          <path d="M9 10H38M9 19H38M9 28H30" stroke="#101010" strokeWidth="4" />
        </svg>
        <div className="absolute left-[58px] top-[57px] flex h-[49px] w-[50px] items-center justify-center rounded-full border-[2px] border-[#8a8a8a] bg-[#3a3a3a] text-[32px] font-semibold leading-none text-white">
          2
        </div>
      </div>
      <div className="h-full w-[4px] bg-[#666666]" />
    </div>
  );
}

function InkOverlay() {
  return (
    <svg viewBox="0 0 3840 2160" className="pointer-events-none absolute inset-0 h-full w-full" fill="none" stroke="#ffffff" strokeLinecap="round" strokeLinejoin="round">
      <g transform="scale(2.449)" strokeWidth="5.6">
        <path d={smooth(INK)} />
      </g>
      <path d="M152 684C240 678 340 680 405 690" strokeWidth="20" />
      <path d="M152 702C250 710 340 708 406 698" strokeWidth="22" />
      <path d="M160 694H400" strokeWidth="12" />
      <path d="M155 757C180 752 200 753 214 756" strokeWidth="16" />
      <path d="M156 768C180 764 210 764 234 768" strokeWidth="14" />
      <path d="M157 778C180 780 215 780 234 776" strokeWidth="16" />
    </svg>
  );
}

function Tooltip() {
  return (
    <div className="absolute left-[3203px] top-[1987px] flex h-[53px] w-[402px] items-center justify-center border-[2px] border-[#8c8c8c] bg-[#b0b0b0] pt-[2px] text-[34px] text-[#444444]">
      Windows Ink Workspace
    </div>
  );
}

export default function App() {
  return (
    <div
      className="relative flex h-[2160px] w-[3840px] flex-col overflow-hidden bg-[#191919] text-[34px] leading-[46px]"
      style={{ fontFamily: FONT }}
    >
      <Defs />
      <TitleBar />
      <Ribbon />
      <NavBar />
      <div className="flex min-h-0 flex-1">
        <Sidebar />
        <Main />
      </div>
      <StatusBar />
      <Taskbar />
      <Tooltip />
      <InkOverlay />
    </div>
  );
}
